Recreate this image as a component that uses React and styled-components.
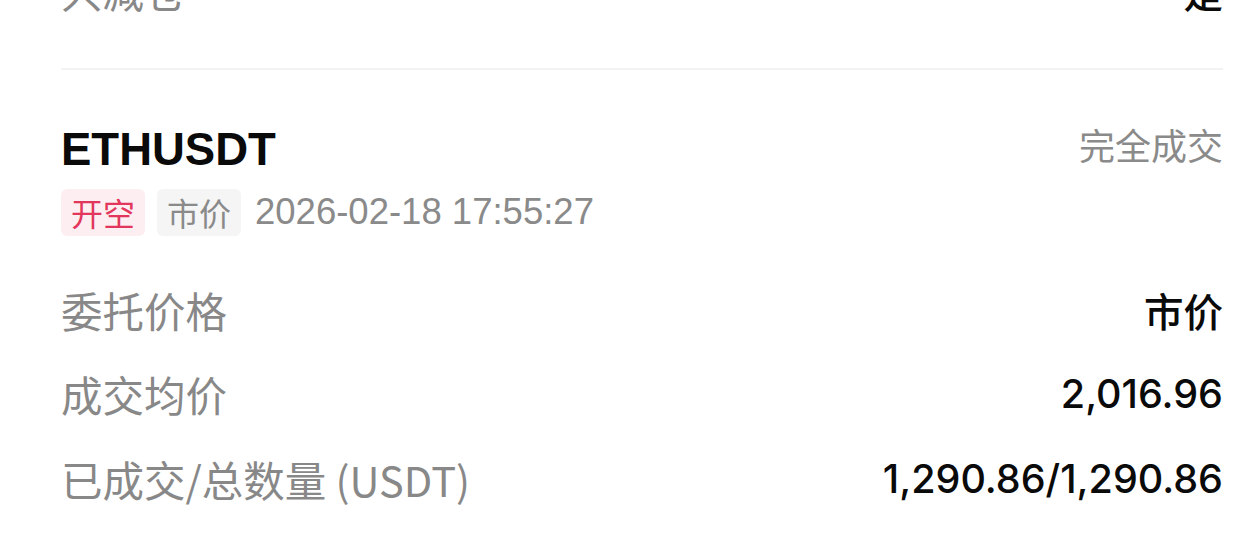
import React from "react";
import styled, { createGlobalStyle } from "styled-components";

const GlobalStyle = createGlobalStyle`
    html, body {
        margin: 0;
        padding: 0;
        background: #ffffff;
        overflow: hidden;
    }
    body {
        font-family: "Liberation Sans", "Noto Sans CJK SC", sans-serif;
        -webkit-font-smoothing: antialiased;
    }
`;

const rows = [
    { label: "委托价格", value: "市价" },
    { label: "成交均价", value: "2,016.96" },
    { label: "已成交/总数量 (USDT)", value: "1,290.86/1,290.86" },
];

const App = () => {
    return (
        <>
            <GlobalStyle />
            <Page>
                {/* previous order, scrolled mostly out of view */}
                <PrevCard>
                    <Row>
                        <Label>只减仓</Label>
                        <Value>是</Value>
                    </Row>
                </PrevCard>

                <Card>
                    <Header>
                        <Symbol>ETHUSDT</Symbol>
                        <State>完全成交</State>
                    </Header>
                    <Meta>
                        <Tag tone="red">开空</Tag>
                        <Tag>市价</Tag>
                        <Time>2026-02-18 17:55:27</Time>
                    </Meta>
                    <Rows>
                        {rows.map((r) => (
                            <Row key={r.label}>
                                <Label>{r.label}</Label>
                                <Value>{r.value}</Value>
                            </Row>
                        ))}
                    </Rows>
                </Card>
            </Page>
        </>
    );
};

export default App;

const Page = styled.div`
    margin-top: -52px;
    padding: 0 29px 0 61px;
`;

const PrevCard = styled.div`
    padding-bottom: 35px;
    border-bottom: 2px solid #f3f3f3;
`;

const Card = styled.div`
    padding-top: 52px;
`;

const Header = styled.div`
    display: flex;
    align-items: center;
    justify-content: space-between;
    height: 56px;
`;

const Symbol = styled.div`
    font-family: "Liberation Sans", "Noto Sans CJK SC", sans-serif;
    font-weight: 700;
    font-size: 45.5px;
    color: #0a0a0a;
`;

const State = styled.div`
    font-family: "Noto Sans CJK SC", sans-serif;
    font-size: 36px;
    color: #8a8a8a;
    margin-top: -12px;
`;

const Meta = styled.div`
    display: flex;
    align-items: center;
    gap: 12px;
    margin-top: 11px;
`;

const Tag = styled.span`
    display: inline-flex;
    align-items: center;
    justify-content: center;
    height: 47px;
    width: 84px;
    box-sizing: border-box;
    border-radius: 6px;
    font-family: "Noto Sans CJK SC", sans-serif;
    font-size: 32px;
    background: ${(p) => (p.tone === "red" ? "#fdeef1" : "#f5f5f5")};
    color: ${(p) => (p.tone === "red" ? "#e2365c" : "#8a8a8a")};
`;

const Time = styled.span`
    margin-left: 2px;
    font-family: "Liberation Sans", sans-serif;
    font-size: 36.5px;
    color: #8a8a8a;
`;

const Rows = styled.div`
    margin-top: 32px;
`;

const Row = styled.div`
    display: flex;
    align-items: center;
    justify-content: space-between;
    height: 84.5px;
`;

const Label = styled.div`
    font-family: "Noto Sans CJK SC", sans-serif;
    font-size: 41.5px;
    color: #888888;
`;

const Value = styled.div`
    font-family: "Inter", "Noto Sans CJK SC", sans-serif;
    font-weight: 500;
    font-size: 39.5px;
    color: #0a0a0a;
`;
